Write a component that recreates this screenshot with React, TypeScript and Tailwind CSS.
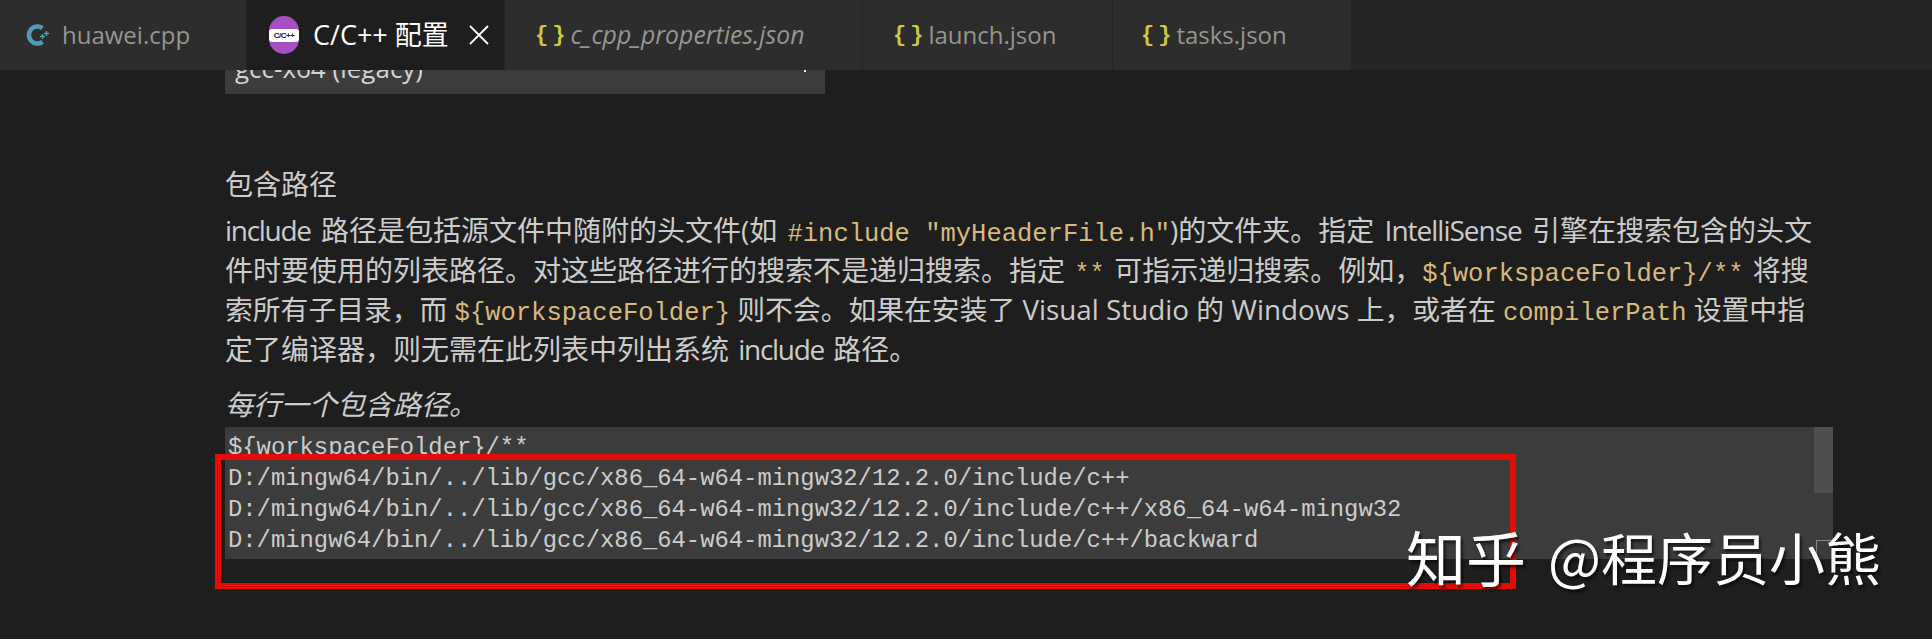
import React from 'react';

const SANS = "font-['Open_Sans','Noto_Sans_CJK_SC',sans-serif]";

const Code: React.FC<{ children: React.ReactNode }> = ({ children }) => (
  <code className="font-['Liberation_Mono','Noto_Sans_CJK_SC',monospace] text-[25.500px] leading-none [word-spacing:0] text-[#d7ba7d]">{children}</code>
);

const Braces = () => (
  <span className="font-['Liberation_Mono',monospace] text-[22px] font-bold tracking-[4px] text-[#cbcb41] mr-[1px]">{'{}'}</span>
);

const CppIcon = () => (
  <svg viewBox="0 0 24 24" className="w-[24px] h-[24px] mr-[12px] shrink-0">
    <path d="M16.5 5.2A8.5 8.5 0 1 0 16.5 18.8" fill="none" stroke="#519aba" strokeWidth="4.6" />
    <path d="M15 12h5M17.500 9.500v5M19 9h5M21.500 6.500v5" stroke="#519aba" strokeWidth="1.400" transform="translate(-1 1.500)" />
  </svg>
);

const ConfigIcon = () => (
  <div className="relative w-[30px] h-[38px] mr-[14px] shrink-0 rounded-full bg-[#a74fc0] overflow-hidden flex items-center justify-center">
    <div className="w-full h-[13px] bg-white rounded-[3px] text-center text-[#222] text-[8px] leading-[13px] font-bold font-['Liberation_Sans',sans-serif] tracking-[-0.5px]">C/C++</div>
  </div>
);

type TabProps = { width: string; active?: boolean; children: React.ReactNode };

const Tab: React.FC<TabProps> = ({ width, active, children }) => (
  <div className={`${width} h-full flex items-center shrink-0 border-r border-[#252526] ${active ? 'bg-[#1e1e1e] text-white' : 'bg-[#2d2d2d] text-[#96968f]'}`}>
    {children}
  </div>
);

const includePaths = [
  '${workspaceFolder}/**',
  'D:/mingw64/bin/../lib/gcc/x86_64-w64-mingw32/12.2.0/include/c++',
  'D:/mingw64/bin/../lib/gcc/x86_64-w64-mingw32/12.2.0/include/c++/x86_64-w64-mingw32',
  'D:/mingw64/bin/../lib/gcc/x86_64-w64-mingw32/12.2.0/include/c++/backward',
];

export default function App() {
  return (
    <div className={`relative w-[1932px] h-[639px] overflow-hidden bg-[#1e1e1e] text-[#cccccc] ${SANS}`}>
      {/* Tab strip */}
      <div className="relative z-10 flex h-[70px] bg-[#252526] text-[24px]">
        <Tab width="w-[247px] pl-[26px]">
          <CppIcon />
          <span>huawei.cpp</span>
        </Tab>
        <Tab width="w-[258px] pl-[22px]" active>
          <ConfigIcon />
          <span className="text-[27px] whitespace-nowrap">C/C++ 配置</span>
          <svg viewBox="0 0 20 20" className="w-[20px] h-[20px] ml-[20px]">
            <path d="M1 1L19 19M19 1L1 19" stroke="#fff" strokeWidth="1.800" />
          </svg>
        </Tab>
        <Tab width="w-[358px] pl-[30px]">
          <Braces />
          <span className="italic text-[24.800px]">c_cpp_properties.json</span>
        </Tab>
        <Tab width="w-[250px] pl-[30px]">
          <Braces />
          <span>launch.json</span>
        </Tab>
        <Tab width="w-[239px] pl-[28px]">
          <Braces />
          <span>tasks.json</span>
        </Tab>
      </div>

      {/* Settings page, scrolled */}
      <div className="-mt-[24px] pl-[225px]">
        <div className="relative w-[600px] h-[48px] bg-[#3c3c3c] px-[10px] text-[26px] leading-[44px] text-[#d4d4d4]">
          gcc-x64 (legacy)
          <div className="absolute right-[19px] top-[24px] w-[2px] h-[2px] bg-white" />
        </div>

        <div className="mt-[70px] text-[28px] leading-[40px]">包含路径</div>

        <div className="mt-[7px] w-[1608px] text-[28px] leading-[39.500px] whitespace-nowrap">
          <div className="h-[39.500px] [word-spacing:3px]"><span className="tracking-[-1.300px]">include</span> 路径是包括源文件中随附的头文件(如 <Code>#include "myHeaderFile.h"</Code>)的文件夹。指定 <span className="tracking-[-1px]">IntelliSense</span> 引擎在搜索包含的头文</div>
          <div className="h-[39.500px] [word-spacing:2px]">件时要使用的列表路径。对这些路径进行的搜索不是递归搜索。指定 <Code>**</Code> 可指示递归搜索。例如，<Code>{'${workspaceFolder}/**'}</Code> 将搜</div>
          <div className="h-[39.500px] text-[27.800px]">索所有子目录，而 <Code>{'${workspaceFolder}'}</Code> 则不会。如果在安装了 Visual Studio 的 Windows 上，或者在 <Code>compilerPath</Code> 设置中指</div>
          <div className="h-[39.500px] [word-spacing:2px]">定了编译器，则无需在此列表中列出系统 <span className="tracking-[-1.300px]">include</span> 路径。</div>
        </div>

        <div className="mt-[15px] h-[40px] text-[28px] leading-[40px] italic">每行一个包含路径。</div>

        <div className="relative mt-[3px] w-[1608px] h-[132px] bg-[#3c3c3c] pl-[3px] pt-[5px] font-['Liberation_Mono',monospace] text-[23.850px] leading-[31px] text-[#cccccc]">
          {includePaths.map(line => (
            <div key={line}>{line}</div>
          ))}
          <div className="absolute right-0 top-0 w-[19px] h-[66px] bg-[#4f4f4f]" />
          <div className="absolute right-[2px] bottom-[4px] w-[15px] h-[15px] border-l border-t border-[#8a8a8a]" />
        </div>
      </div>

      {/* Red annotation and watermark */}
      <div className="absolute left-[215px] top-[454px] w-[1301px] h-[135px] border-[6px] border-[#e60a0a]" />
      <div className="absolute left-[1406px] top-[518px] flex items-center whitespace-nowrap leading-[76px] text-white [text-shadow:2px_3px_3px_rgba(0,0,0,0.6)] font-['Noto_Sans_CJK_SC',sans-serif]">
        <span className="text-[60px]">知乎</span>
        <span className="ml-[22px] text-[56px]">@程序员小熊</span>
      </div>
    </div>
  );
}
